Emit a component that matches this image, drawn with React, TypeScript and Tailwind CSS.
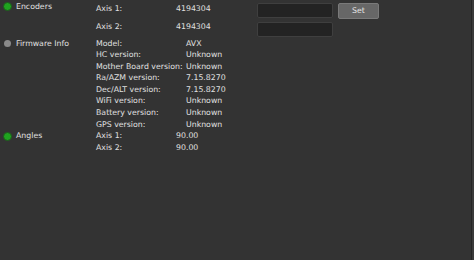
import React from 'react';

type Row = { label: string; value: string };

const firmware: Row[] = [
  { label: 'Model:', value: 'AVX' },
  { label: 'HC version:', value: 'Unknown' },
  { label: 'Mother Board version:', value: 'Unknown' },
  { label: 'Ra/AZM version:', value: '7.15.8270' },
  { label: 'Dec/ALT version:', value: '7.15.8270' },
  { label: 'WiFi version:', value: 'Unknown' },
  { label: 'Battery version:', value: 'Unknown' },
  { label: 'GPS version:', value: 'Unknown' },
];

function Dot({ on }: { on: boolean }) {
  return on ? (
    <span className="ml-[3px] mr-[4px] block h-[9px] w-[9px] rounded-full border border-[#1d5a1d] bg-[#1fa31f]" />
  ) : (
    <span className="ml-[4px] mr-[5px] block h-[7px] w-[7px] rounded-full bg-[#8a8a8a]" />
  );
}

function Heading({ on, title }: { on: boolean; title: string }) {
  return (
    <div className="flex w-[96px] shrink-0 items-center h-[11.6px]">
      <Dot on={on} />
      <span>{title}</span>
    </div>
  );
}

export default function App() {
  return (
    <div
      className="flex h-[260px] w-[474px] overflow-hidden bg-[#333333] text-[7.8px] leading-[11.6px] text-[#e0e0e0]"
      style={{ fontFamily: '"DejaVu Sans", sans-serif' }}
    >
      <div className="flex-1">
        {/* Encoders */}
        <div className="flex">
          <div className="pt-[1px]">
            <Heading on title="Encoders" />
          </div>
          <div className="flex flex-col gap-[7.4px] pt-[2.5px]">
            <div className="flex">
              <span className="w-[80px]">Axis 1:</span>
              <span className="w-[81px]">4194304</span>
            </div>
            <div className="flex">
              <span className="w-[80px]">Axis 2:</span>
              <span className="w-[81px]">4194304</span>
            </div>
          </div>
          <div className="mt-[3px] flex gap-[5px]">
            <div className="flex flex-col gap-[4px]">
              <div className="h-[15px] w-[76px] rounded-[2px] border border-[#3f3f3f] bg-[#232323]" />
              <div className="h-[15px] w-[76px] rounded-[2px] border border-[#3f3f3f] bg-[#232323]" />
            </div>
            <button className="h-[16px] w-[41px] rounded-[2px] border border-[#7a7a7a] bg-[#676767] text-[7.8px] leading-[14px] text-[#e6e6e6]">
              Set
            </button>
          </div>
        </div>

        {/* Firmware Info */}
        <div className="mt-[0.5px] flex">
          <Heading on={false} title="Firmware Info" />
          <div className="flex flex-col">
            {firmware.map((r) => (
              <div key={r.label} className="flex">
                <span className="w-[90px]">{r.label}</span>
                <span>{r.value}</span>
              </div>
            ))}
          </div>
        </div>

        {/* Angles */}
        <div className="flex">
          <Heading on title="Angles" />
          <div className="flex flex-col">
            <div className="flex">
              <span className="w-[80px]">Axis 1:</span>
              <span>90.00</span>
            </div>
            <div className="flex">
              <span className="w-[80px]">Axis 2:</span>
              <span>90.00</span>
            </div>
          </div>
        </div>
      </div>
      <div className="w-[3px] shrink-0 border-l border-[#262626] bg-[#3a3a3a]" />
    </div>
  );
}
